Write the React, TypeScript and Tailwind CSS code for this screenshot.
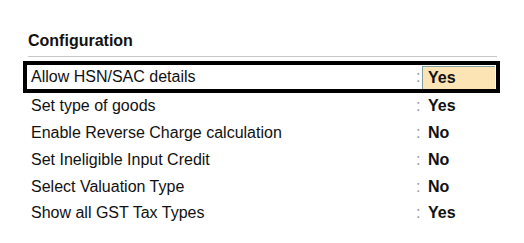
const rows = [
  { label: "Set type of goods", value: "Yes" },
  { label: "Enable Reverse Charge calculation", value: "No" },
  { label: "Set Ineligible Input Credit", value: "No" },
  { label: "Select Valuation Type", value: "No" },
  { label: "Show all GST Tax Types", value: "Yes" },
];

export default function App() {
  return (
    <div
      className="w-[524px] h-[243px] bg-white pl-[23px] pt-[31px] text-[#111] text-[16px]"
      style={{ fontFamily: '"Liberation Sans", Arial, sans-serif' }}
    >
      <div className="ml-[5px] font-bold leading-[20px]">Configuration</div>
      <div className="ml-[5px] mt-[5px] h-px w-[469px] bg-[#c8c8c8]" />

      {/* selected row */}
      <div className="mt-[4px] flex h-[32px] w-[477px] items-center border-4 border-black">
        <div className="w-[387px] pl-[4px] leading-[20px]">Allow HSN/SAC details</div>
        <div className="w-[8px] pl-[2px] leading-[20px] text-[#999]">:</div>
        <div className="flex h-[23px] w-[73px] items-center border-l border-t border-[#7f9fa0] bg-[#fde4b4] pl-[5px] font-bold leading-[20px]">
          Yes
        </div>
      </div>

      {rows.map((r) => (
        <div key={r.label} className="ml-[4px] flex h-[26.75px] w-[469px] items-center leading-[20px]">
          <div className="w-[387px] pl-[4px]">{r.label}</div>
          <div className="w-[8px] pl-[2px] text-[#999]">:</div>
          <div className="pl-[6px] font-bold">{r.value}</div>
        </div>
      ))}
    </div>
  );
}
